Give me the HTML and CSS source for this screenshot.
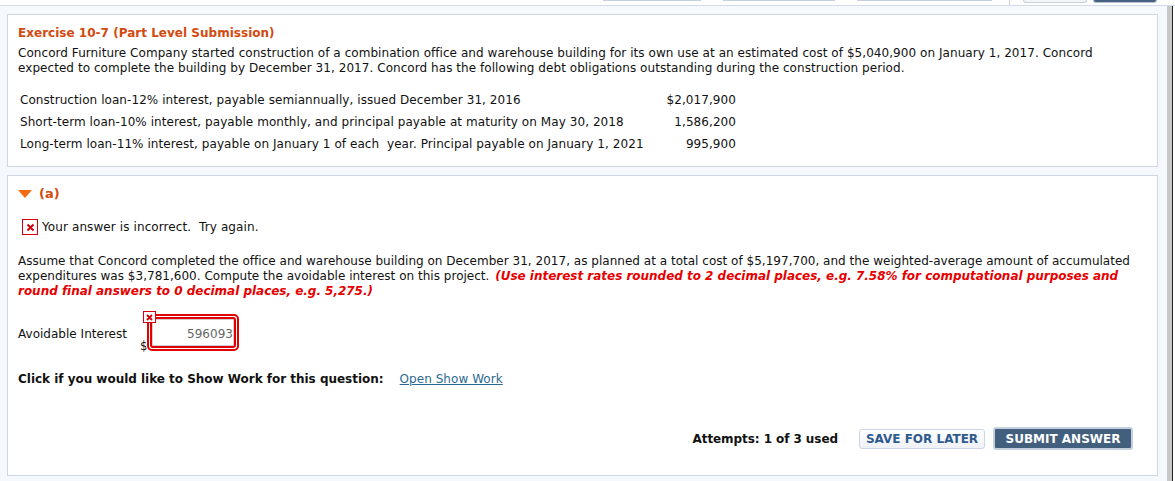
FILE: index.html
```html
<!DOCTYPE html>
<html lang="en">
<head>
    <meta charset="UTF-8">
    <title>Exercise 10-7</title>
    <link rel="stylesheet" href="styles.css">
</head>
<body>
    <div class="toolbar">
        <div class="tabs">
            <span class="tab tab-a"></span>
            <span class="tab tab-b"></span>
            <span class="tab tab-c"></span>
        </div>
        <div class="nav">
            <span class="nav-btn"></span>
            <span class="nav-btn nav-dark"></span>
        </div>
    </div>

    <div class="page">
        <main class="content">
            <section class="card question">
                <h1>Exercise 10-7 (Part Level Submission)</h1>
                <p class="intro">Concord Furniture Company started construction of a combination office and warehouse building for its own use at an estimated cost of $5,040,900 on January 1, 2017. Concord expected to complete the building by December 31, 2017. Concord has the following debt obligations outstanding during the construction period.</p>
                <table class="debts">
                    <tr><td>Construction loan-12% interest, payable semiannually, issued December 31, 2016</td><td class="amount">$2,017,900</td></tr>
                    <tr><td>Short-term loan-10% interest, payable monthly, and principal payable at maturity on May 30, 2018</td><td class="amount">1,586,200</td></tr>
                    <tr><td>Long-term loan-11% interest, payable on January 1 of each &nbsp;year. Principal payable on January 1, 2021</td><td class="amount">995,900</td></tr>
                </table>
            </section>

            <section class="card part">
                <h2><span class="arrow"></span>(a)</h2>
                <div class="result">
                    <span class="x-box">
                        <svg width="9" height="9" viewBox="0 0 9 9"><path d="M1.5 1.5l6 6M7.5 1.5l-6 6" stroke="#d8000c" stroke-width="2"/></svg>
                    </span>
                    <span>Your answer is incorrect. &nbsp;Try again.</span>
                </div>
                <p class="task">Assume that Concord completed the office and warehouse building on December 31, 2017, as planned at a total cost of $5,197,700, and the weighted-average amount of accumulated expenditures was $3,781,600. Compute the avoidable interest on this project. <em>(Use interest rates rounded to 2 decimal places, e.g. 7.58% for computational purposes and round final answers to 0 decimal places, e.g. 5,275.)</em></p>
                <div class="answer">
                    <label>Avoidable Interest</label>
                    <span class="dollar">$</span>
                    <div class="field">
                        <span class="x-box x-small">
                            <svg width="7" height="7" viewBox="0 0 7 7"><path d="M1 1l5 5M6 1l-5 5" stroke="#d8000c" stroke-width="1.8"/></svg>
                        </span>
                        <div class="input">596093</div>
                    </div>
                </div>
                <div class="show-work">
                    <b>Click if you would like to Show Work for this question:</b>
                    <a href="#">Open Show Work</a>
                </div>
                <div class="actions">
                    <b>Attempts: 1 of 3 used</b>
                    <button class="btn-save">SAVE FOR LATER</button>
                    <button class="btn-submit">SUBMIT ANSWER</button>
                </div>
            </section>
        </main>
        <div class="scroll-edge"></div>
    </div>
</body>
</html>
```

FILE: styles.css
```css
* {
    box-sizing: border-box;
}
html, body {
    height: 100%;
}
body {
    margin: 0;
    background: white;
    color: #111;
    font-family: "DejaVu Sans", Verdana, sans-serif;
    font-size: 12px;
    letter-spacing: 0.02px;
    overflow: hidden;
}
.toolbar {
    display: flex;
    justify-content: space-between;
    height: 6px;
    background: white;
    border-bottom: 1px solid #d3dae8;
}
.tabs {
    display: flex;
    gap: 22px;
    margin-left: 603px;
}
.tab {
    height: 1px;
    background: #c5cfdc;
}
.tab-a { width: 98px; }
.tab-b { width: 112px; }
.tab-c { width: 135px; }
.nav {
    display: flex;
    gap: 6px;
    margin-right: 18px;
    padding-left: 13px;
    border-left: 1px solid #c8ced8;
}
.nav-btn {
    width: 64px;
    height: 3px;
    background: #f2f4f8;
    border: 1px solid #c8d0de;
    border-top: none;
    border-radius: 0 0 4px 4px;
}
.nav-dark {
    background: #466280;
    border-color: #b5c2d4;
}
.page {
    display: flex;
    height: 475px;
}
.content {
    width: 1167px;
    height: 475px;
    padding: 8px 9px 0 7px;
    background: #f5f8fc;
}
.scroll-edge {
    width: 6px;
    background: #c8c8c8;
    border-right: 1px solid #222;
}
.card {
    background: white;
    border: 1px solid #cfd6e4;
}
.question {
    height: 153px;
    padding: 10px 10px 0;
}
h1 {
    margin: 0 0 4px;
    font-size: 12px;
    line-height: 17px;
    color: #d24a0f;
}
.intro {
    margin: 0 0 13px;
    padding-right: 50px;
    line-height: 15px;
    letter-spacing: 0.055px;
}
.debts {
    border-collapse: collapse;
    letter-spacing: 0.07px;
}
.debts td {
    padding: 0 2px;
    height: 22px;
}
.debts td:first-child {
    width: 640px;
}
.amount {
    width: 80px;
    text-align: right;
}
.part {
    margin-top: 8px;
    height: 301px;
    padding: 0 10px;
}
h2 {
    display: flex;
    align-items: center;
    margin: 9px 0 0;
    font-size: 13px;
    line-height: 17px;
    color: #d24a0f;
}
.arrow {
    width: 0;
    height: 0;
    margin-right: 7px;
    border-left: 7.5px solid transparent;
    border-right: 7.5px solid transparent;
    border-top: 8px solid #f26a13;
}
.result {
    display: flex;
    align-items: center;
    gap: 4px;
    margin: 17px 0 0 4px;
    letter-spacing: 0.1px;
}
.x-box {
    display: flex;
    align-items: center;
    justify-content: center;
    width: 16px;
    height: 16px;
    background: white;
    border: 1px solid #d8000c;
}
.task {
    margin: 19px 0 0;
    line-height: 15px;
}
.task em {
    margin-left: 2px;
    color: #e60000;
    font-weight: bold;
    letter-spacing: -0.02px;
}
.answer {
    display: flex;
    align-items: flex-start;
    margin-top: 15px;
}
.answer label {
    width: 122px;
    margin-top: 13px;
}
.dollar {
    margin-top: 25px;
    width: 7px;
}
.field {
    position: relative;
    width: 92px;
    height: 37px;
    padding: 1px;
    border: 2px solid #e00000;
    border-radius: 5px;
    box-shadow: 0 0 0 1px white;
}
.x-small {
    position: absolute;
    top: -5px;
    left: -6px;
    width: 13px;
    height: 12px;
}
.input {
    width: 100%;
    height: 100%;
    padding: 8px 1px 0 0;
    border: 2px solid #e00000;
    border-radius: 3px;
    box-shadow: inset 0 0 0 1px #d0d0d0;
    text-align: right;
    color: #666;
}
.show-work {
    display: flex;
    gap: 16px;
    margin-top: 19px;
}
.show-work b {
    letter-spacing: -0.02px;
}
.show-work a {
    color: #2c6a94;
    letter-spacing: 0.05px;
}
.actions {
    display: flex;
    align-items: center;
    justify-content: flex-end;
    margin: 41px 14px 0 0;
}
.actions b {
    margin-right: 21px;
    letter-spacing: -0.07px;
}
.actions button {
    font-family: inherit;
    font-weight: bold;
    font-size: 12px;
    border-radius: 3px;
}
.btn-save {
    width: 126px;
    height: 20px;
    padding: 0;
    margin-right: 8px;
    background: linear-gradient(#fff, #eef1f6);
    border: 1px solid #ccd5e3;
    color: #2f5a8e;
}
.btn-submit {
    width: 140px;
    height: 23px;
    padding: 0;
    background: #42607d;
    border: 2px solid #c5d0df;
    color: white;
}
```
